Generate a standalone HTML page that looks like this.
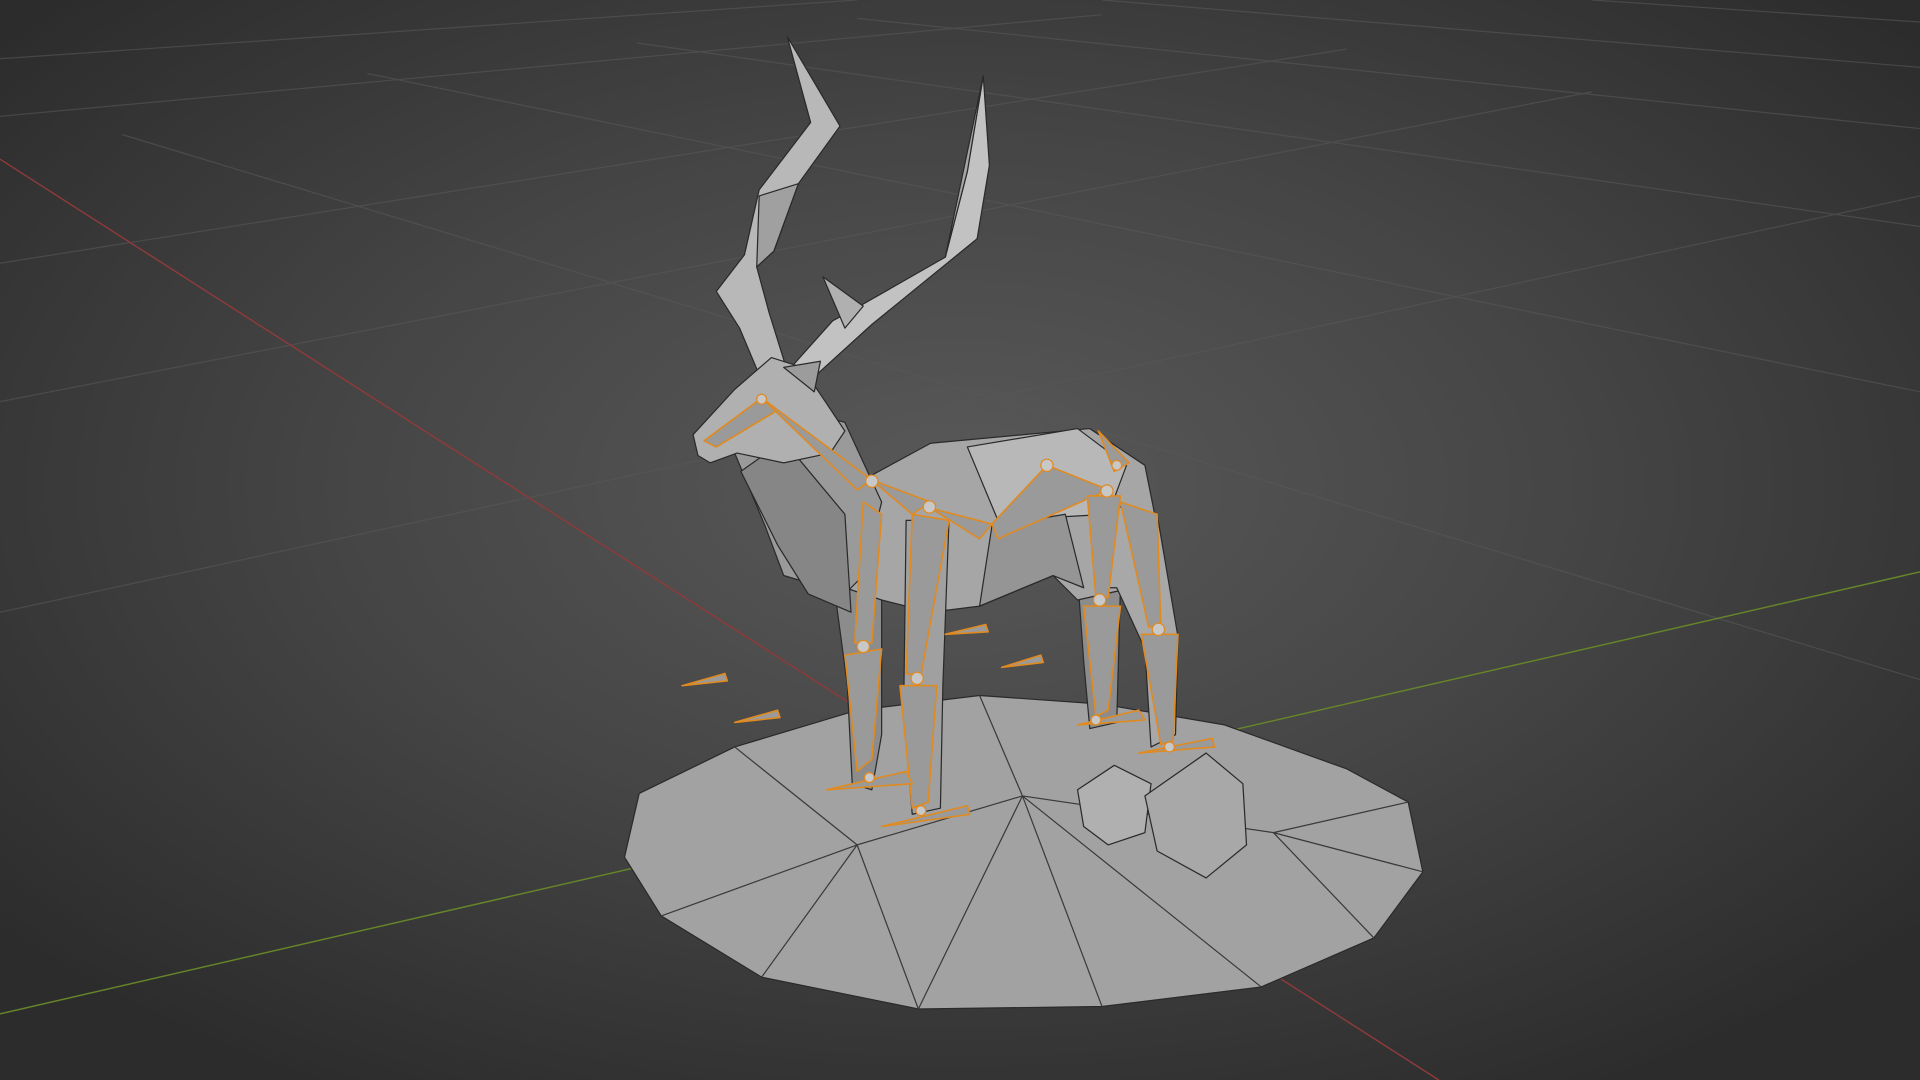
<!DOCTYPE html>
<html><head><meta charset="utf-8"><style>
html,body{margin:0;padding:0;width:1920px;height:1080px;overflow:hidden;background:#3a3a3a}
svg{display:block}
</style></head><body>
<svg width="1920" height="1080" viewBox="0 0 1568 882" preserveAspectRatio="none">
<defs>
<radialGradient id="bg" cx="0.5" cy="0.45" r="0.65">
<stop offset="0" stop-color="#595959"/>
<stop offset="0.5" stop-color="#454545"/>
<stop offset="1" stop-color="#2c2c2c"/>
</radialGradient>
</defs>
<rect width="1568" height="882" fill="url(#bg)"/>
<g stroke="#585858" stroke-width="1" fill="none" opacity="0.6">
<path d="M0 48 L700 0"/><path d="M0 95 L900 12"/><path d="M0 215 L1100 40"/><path d="M0 328 L1300 75"/><path d="M0 500 L1568 160"/>
<path d="M1568 18 L1300 0"/><path d="M1568 55 L900 0"/><path d="M1568 105 L700 15"/><path d="M1568 185 L520 35"/><path d="M1568 320 L300 60"/><path d="M1568 555 L100 110"/>
</g>
<path d="M0 130 L1175 882" stroke="#8e3a3a" stroke-width="1.2"/>
<path d="M0 828 L1568 467" stroke="#66842a" stroke-width="1.2"/>
<g stroke="#2a2a2a" stroke-width="1" stroke-linejoin="round">
<polygon fill="#a2a2a2" points="510,700 522,648 600,610 700,580 800,568 900,575 1000,592 1100,628 1150,655 1162,712 1122,766 1030,806 900,822 750,824 622,798 540,748"/>
<g fill="none" stroke="#3a3a3a">
<path d="M700 690 L622 798 M700 690 L750 824 M700 690 L540 748 M835 650 L900 822 M835 650 L750 824 M835 650 L1030 806 M1040 680 L1122 766 M1040 680 L1162 712 M1040 680 L1150 655 M700 690 L835 650 L1040 680 M700 690 L600 610 M835 650 L800 568"/>
</g>
<!-- antlers -->
<polygon fill="#b8b8b8" points="643,30 686,103 652,150 632,205 618,218 628,255 642,300 620,306 604,268 585,238 608,208 620,155 662,100"/>
<polygon fill="#a0a0a0" points="652,150 632,205 618,218 620,160"/>
<polygon fill="#c2c2c2" points="803,62 808,135 798,195 712,265 668,305 646,300 680,262 702,250 772,210 790,140"/>
<polygon fill="#a6a6a6" points="790,140 803,62 772,210"/>
<polygon fill="#b0b0b0" points="672,226 705,250 690,268"/>
<!-- legs back -->
<polygon fill="#8c8c8c" points="680,470 720,480 720,600 712,645 696,640 692,560"/>
<polygon fill="#8c8c8c" points="880,470 915,480 912,590 890,595 885,540"/>
<!-- body -->
<polygon fill="#a6a6a6" points="690,400 760,362 890,350 935,380 945,430 925,480 880,490 860,470 800,495 760,500 720,490 690,480"/>
<polygon fill="#b8b8b8" points="790,365 880,350 920,380 905,420 815,425"/>
<polygon fill="#959595" points="810,430 870,420 885,480 860,470 800,495"/>
<!-- neck / chest -->
<polygon fill="#9a9a9a" points="600,370 640,330 690,345 720,410 705,470 690,485 640,470 625,430"/>
<polygon fill="#868686" points="605,385 640,360 690,420 695,500 660,485 635,445"/>
<!-- head -->
<polygon fill="#b0b0b0" points="566,355 600,318 630,292 655,300 672,325 690,352 678,370 640,378 602,370 580,378 570,372"/>
<polygon fill="#9c9c9c" points="640,300 670,295 665,320"/>
<!-- front legs -->
<polygon fill="#a0a0a0" points="740,425 775,425 770,560 768,660 745,665 738,580"/>
<polygon fill="#a8a8a8" points="895,410 945,420 962,520 960,600 940,610 935,530 912,480 900,480"/>
</g>
<g stroke="#e08a20" stroke-width="1.3" fill="#9a9a9a" stroke-linejoin="round">
<polygon points="575,360 622,325 635,335 585,365"/>
<polygon points="622,325 712,392 700,400"/>
<polygon points="712,392 760,410 745,420"/>
<polygon points="760,415 810,428 800,440"/>
<polygon points="810,428 855,380 905,400 815,440"/>
<polygon points="897,352 922,378 910,385"/>
<polygon points="705,410 720,420 712,525 698,525"/>
<polygon points="745,420 775,425 752,552 740,550"/>
<polygon points="690,535 720,530 712,620 700,630"/>
<polygon points="735,560 765,560 758,655 745,660"/>
<polygon points="888,405 915,405 905,488 895,488"/>
<polygon points="915,410 945,420 948,512 938,512"/>
<polygon points="885,495 915,495 905,580 895,585"/>
<polygon points="932,518 962,518 958,605 948,608"/>
<polygon points="675,645 740,630 745,640"/>
<polygon points="720,675 790,658 792,665"/>
<polygon points="880,592 930,580 935,588"/>
<polygon points="930,615 990,603 992,610"/>
<polygon points="557,560 592,550 594,556"/>
<polygon points="600,590 635,580 637,586"/>
<polygon points="772,518 805,510 807,516"/>
<polygon points="818,545 850,535 852,541"/>
</g>
<g stroke="#2a2a2a" stroke-width="1" stroke-linejoin="round">
<polygon fill="#b0b0b0" points="880,645 910,625 940,640 935,680 905,690 885,675"/>
<polygon fill="#a8a8a8" points="935,650 985,615 1015,640 1018,690 985,717 945,695"/>
</g>
<g fill="#c8c8c8" stroke="#e08a20" stroke-width="1">
<circle cx="622" cy="326" r="4"/><circle cx="712" cy="393" r="5"/><circle cx="759" cy="414" r="5"/><circle cx="855" cy="380" r="5"/><circle cx="904" cy="401" r="5"/><circle cx="912" cy="380" r="4"/>
<circle cx="705" cy="528" r="5"/><circle cx="749" cy="554" r="5"/><circle cx="898" cy="490" r="5"/><circle cx="946" cy="514" r="5"/>
<circle cx="710" cy="635" r="4"/><circle cx="752" cy="662" r="4"/><circle cx="895" cy="588" r="4"/><circle cx="955" cy="610" r="4"/>
</g>
</svg>
</body></html>
